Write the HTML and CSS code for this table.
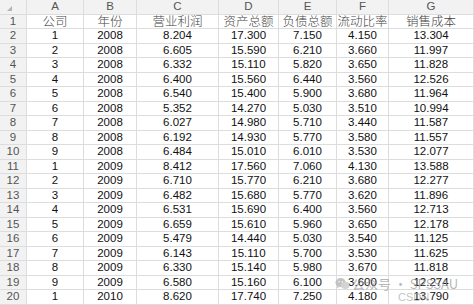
FILE: index.html
```html
<!DOCTYPE html>
<html lang="zh">
<head>
<meta charset="utf-8">
<link rel="stylesheet" href="styles.css">
</head>
<body>
<div class="sheet">
  <div class="grid" id="grid">
    <div class="corner"><span class="tri"></span></div>
    <div class="ch">A</div><div class="ch">B</div><div class="ch">C</div><div class="ch">D</div><div class="ch">E</div><div class="ch">F</div><div class="ch">G</div>
    <div class="rh">1</div><div class="zh">公司</div><div class="zh">年份</div><div class="zh">营业利润</div><div class="zh">资产总额</div><div class="zh">负债总额</div><div class="zh">流动比率</div><div class="zh">销售成本</div>
    <div class="rh">2</div><div class="c">1</div><div class="c">2008</div><div class="c">8.204</div><div class="c">17.300</div><div class="c">7.150</div><div class="c">4.150</div><div class="c">13.304</div>
    <div class="rh">3</div><div class="c">2</div><div class="c">2008</div><div class="c">6.605</div><div class="c">15.590</div><div class="c">6.210</div><div class="c">3.660</div><div class="c">11.997</div>
    <div class="rh">4</div><div class="c">3</div><div class="c">2008</div><div class="c">6.332</div><div class="c">15.110</div><div class="c">5.820</div><div class="c">3.650</div><div class="c">11.828</div>
    <div class="rh">5</div><div class="c">4</div><div class="c">2008</div><div class="c">6.400</div><div class="c">15.560</div><div class="c">6.440</div><div class="c">3.560</div><div class="c">12.526</div>
    <div class="rh">6</div><div class="c">5</div><div class="c">2008</div><div class="c">6.540</div><div class="c">15.400</div><div class="c">5.900</div><div class="c">3.680</div><div class="c">11.964</div>
    <div class="rh">7</div><div class="c">6</div><div class="c">2008</div><div class="c">5.352</div><div class="c">14.270</div><div class="c">5.030</div><div class="c">3.510</div><div class="c">10.994</div>
    <div class="rh">8</div><div class="c">7</div><div class="c">2008</div><div class="c">6.027</div><div class="c">14.980</div><div class="c">5.710</div><div class="c">3.440</div><div class="c">11.587</div>
    <div class="rh">9</div><div class="c">8</div><div class="c">2008</div><div class="c">6.192</div><div class="c">14.930</div><div class="c">5.770</div><div class="c">3.580</div><div class="c">11.557</div>
    <div class="rh">10</div><div class="c">9</div><div class="c">2008</div><div class="c">6.484</div><div class="c">15.010</div><div class="c">6.010</div><div class="c">3.530</div><div class="c">12.077</div>
    <div class="rh">11</div><div class="c">1</div><div class="c">2009</div><div class="c">8.412</div><div class="c">17.560</div><div class="c">7.060</div><div class="c">4.130</div><div class="c">13.588</div>
    <div class="rh">12</div><div class="c">2</div><div class="c">2009</div><div class="c">6.710</div><div class="c">15.770</div><div class="c">6.210</div><div class="c">3.680</div><div class="c">12.277</div>
    <div class="rh">13</div><div class="c">3</div><div class="c">2009</div><div class="c">6.482</div><div class="c">15.680</div><div class="c">5.770</div><div class="c">3.620</div><div class="c">11.896</div>
    <div class="rh">14</div><div class="c">4</div><div class="c">2009</div><div class="c">6.531</div><div class="c">15.690</div><div class="c">6.400</div><div class="c">3.560</div><div class="c">12.713</div>
    <div class="rh">15</div><div class="c">5</div><div class="c">2009</div><div class="c">6.659</div><div class="c">15.610</div><div class="c">5.960</div><div class="c">3.650</div><div class="c">12.178</div>
    <div class="rh">16</div><div class="c">6</div><div class="c">2009</div><div class="c">5.479</div><div class="c">14.440</div><div class="c">5.030</div><div class="c">3.540</div><div class="c">11.125</div>
    <div class="rh">17</div><div class="c">7</div><div class="c">2009</div><div class="c">6.143</div><div class="c">15.110</div><div class="c">5.700</div><div class="c">3.530</div><div class="c">11.625</div>
    <div class="rh">18</div><div class="c">8</div><div class="c">2009</div><div class="c">6.330</div><div class="c">15.140</div><div class="c">5.980</div><div class="c">3.670</div><div class="c">11.818</div>
    <div class="rh">19</div><div class="c">9</div><div class="c">2009</div><div class="c">6.580</div><div class="c">15.160</div><div class="c">6.100</div><div class="c">3.600</div><div class="c">12.274</div>
    <div class="rh">20</div><div class="c">1</div><div class="c">2010</div><div class="c">8.620</div><div class="c">17.740</div><div class="c">7.250</div><div class="c">4.180</div><div class="c">13.790</div>
  </div>
  <div class="wm">
    <div class="wm-line1">
      <svg class="wm-icon" viewBox="0 0 16 14" width="15" height="13">
        <ellipse cx="6" cy="6" rx="5.6" ry="4.8" fill="#bdbdbd"/>
        <path d="M2.5 9.5 L2 12 L4.6 10.4 Z" fill="#bdbdbd"/>
        <ellipse cx="11" cy="9" rx="4.6" ry="3.9" fill="#cfcfcf"/>
        <circle cx="4.2" cy="5" r="0.8" fill="#fff"/>
        <circle cx="7.8" cy="5" r="0.8" fill="#fff"/>
      </svg>
      <span>公众号 · SPSSAU</span>
    </div>
    <div class="wm-line2">CSDN @spssau</div>
  </div>
</div>
</body>
</html>
```
FILE: styles.css
```css
html, body {
  margin: 0;
  padding: 0;
  background: #ffffff;
}
.sheet {
  position: relative;
  width: 474px;
  height: 305px;
  overflow: hidden;
}
.grid {
  display: grid;
  grid-template-columns: 27px 57px 53px 82px 60px 58px 52px 85px;
  grid-auto-rows: 14.5px;
  font-family: "Liberation Sans", Arial, sans-serif;
  font-size: 11.5px;
  color: #111;
}
.grid > div {
  box-sizing: border-box;
  border-right: 1px solid #dddddd;
  border-bottom: 1px solid #dddddd;
  display: flex;
  align-items: center;
  justify-content: center;
  white-space: nowrap;
  line-height: 1;
}
.corner {
  background: #f2f2f2;
  position: relative;
}
.tri {
  position: absolute;
  right: 14px;
  bottom: 3px;
  width: 0;
  height: 0;
  border-left: 5px solid transparent;
  border-bottom: 5px solid #b4b4b4;
}
.ch {
  background: #f2f2f2;
  color: #555;
  font-size: 11.5px;
}
.rh {
  background: #f2f2f2;
  color: #555;
}
.zh {
  font-family: "Noto Sans CJK SC", sans-serif;
  font-weight: 300;
  font-size: 12.5px;
  color: #444;
}
.wm {
  position: absolute;
  left: 335px;
  top: 276px;
  color: rgba(150, 150, 150, 0.7);
  font-family: "Noto Sans CJK SC", sans-serif;
}
.wm-line1 {
  display: flex;
  align-items: center;
  gap: 2px;
  font-size: 13px;
  line-height: 15px;
}
.wm-icon {
  opacity: 0.9;
}
.wm-line2 {
  margin-left: 63px;
  font-family: "Liberation Sans", Arial, sans-serif;
  font-size: 11px;
  line-height: 12px;
  color: rgba(160, 160, 160, 0.65);
}
```
